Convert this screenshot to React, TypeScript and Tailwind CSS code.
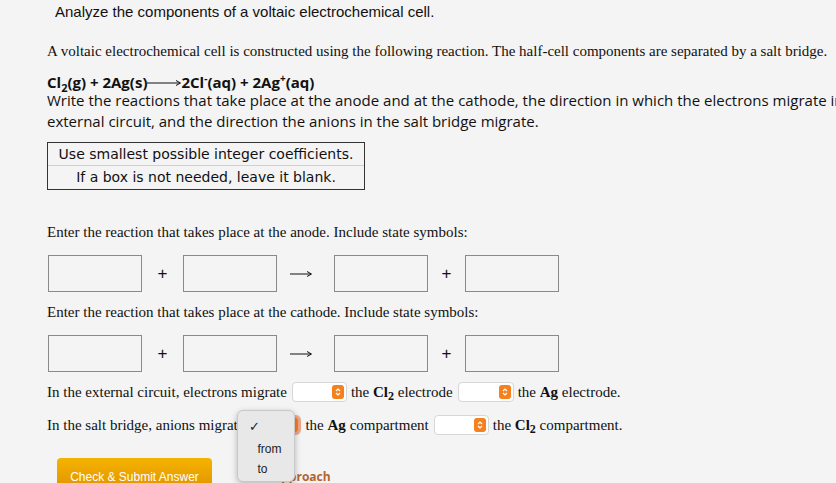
import React from "react";

const serif = { fontFamily: '"Liberation Serif", "Times New Roman", serif' };

function Box() {
  return <div className="w-[94px] h-[37px] border border-[#8a8a8a] bg-[#f4f4f4]" />;
}

function Arrow({ w = 22 }: { w?: number }) {
  return (
    <svg width={w} height="10" viewBox={`0 0 ${w} 10`} className="block">
      <line x1="0" y1="5" x2={w - 1} y2="5" stroke="#111" strokeWidth="1" />
      <path d={`M${w - 5} 2.5 L${w - 0.5} 5 L${w - 5} 7.5`} fill="none" stroke="#111" strokeWidth="1" />
    </svg>
  );
}

function EqRow() {
  return (
    <div className="flex items-center ml-[1px]">
      <Box />
      <span className="w-[41px] text-center text-[17px] text-[#111]" style={{ fontFamily: '"Liberation Sans", Arial, sans-serif' }}>+</span>
      <Box />
      <div className="w-[57px] flex justify-start pl-[13px]"><Arrow /></div>
      <Box />
      <span className="w-[37px] text-center text-[17px] text-[#111]" style={{ fontFamily: '"Liberation Sans", Arial, sans-serif' }}>+</span>
      <Box />
    </div>
  );
}

function Sel({ focus = false, w = 55 }: { focus?: boolean; w?: number }) {
  return (
    <div
      className="relative h-[20px] rounded-[4px] bg-white border border-[#d6d6d6] flex items-center justify-end pr-[2px]"
      style={{ width: w }}
    >
      <div className={`w-[12px] h-[14px] rounded-[3px] bg-[#f5801e] flex items-center justify-center ${focus ? "ring-[3px] ring-[#f0a58a]" : ""}`}>
        <svg width="8" height="10" viewBox="0 0 8 10">
          <path d="M2 4 L4 2 L6 4" fill="none" stroke="white" strokeWidth="1.2" />
          <path d="M2 6 L4 8 L6 6" fill="none" stroke="white" strokeWidth="1.2" />
        </svg>
      </div>
    </div>
  );
}

function Cl2() {
  return (
    <b>
      Cl<sub className="text-[12px] relative top-[3px] align-baseline">2</sub>
    </b>
  );
}

export default function App() {
  return (
    <div className="w-[836px] h-[483px] bg-[#f4f4f4] overflow-hidden relative text-[#111]">
      <div className="pl-[55px] pt-[3px] text-[15px] leading-[18px]" style={{ fontFamily: '"Liberation Sans", Arial, sans-serif' }}>
        Analyze the components of a voltaic electrochemical cell.
      </div>
      <div className="pl-[47px]">
        <div className="mt-[21px] text-[15px] leading-[18px] whitespace-nowrap" style={serif}>
          A voltaic electrochemical cell is constructed using the following reaction. The half-cell components are separated by a salt bridge.
        </div>
        <div className="mt-[11px] text-[15px] leading-[22px] font-bold flex items-center whitespace-nowrap" style={{ fontFamily: '"Open Sans", sans-serif' }}>
          <span>Cl<sub className="text-[11px] align-baseline relative top-[4px]">2</sub>(g) + 2Ag(s)</span>
          <span className="relative top-[1px]"><Arrow w={34} /></span>
          <span>2Cl<sup className="text-[10px] align-baseline relative top-[-6px]">-</sup>(aq) + 2Ag<sup className="text-[10px] align-baseline relative top-[-6px]">+</sup>(aq)</span>
        </div>
        <div className="text-[15px] leading-[21px] whitespace-nowrap -mt-[3px]" style={{ fontFamily: '"Open Sans", sans-serif' }}>
          <div>Write the reactions that take place at the anode and at the cathode, the direction in which the electrons migrate in the</div>
          <div>external circuit, and the direction the anions in the salt bridge migrate.</div>
        </div>
        <div className="mt-[10px] w-[318px] border border-[#333] text-[14px] text-center" style={{ fontFamily: '"DejaVu Sans", Verdana, sans-serif' }}>
          <div className="h-[23px] leading-[23px] border-b border-[#d0d0d0]">Use smallest possible integer coefficients.</div>
          <div className="h-[23px] leading-[23px]">If a box is not needed, leave it blank.</div>
        </div>
        <div className="mt-[33px] text-[15px] leading-[18px]" style={serif}>
          Enter the reaction that takes place at the anode. Include state symbols:
        </div>
        <div className="mt-[14px]"><EqRow /></div>
        <div className="mt-[11px] text-[15px] leading-[18px]" style={serif}>
          Enter the reaction that takes place at the cathode. Include state symbols:
        </div>
        <div className="mt-[14px]"><EqRow /></div>
        <div className="mt-[10px] text-[15px] leading-[20px] flex items-center whitespace-nowrap" style={serif}>
          <span>In the external circuit, electrons migrate</span>
          <span className="ml-[5px] mr-[4px]"><Sel /></span>
          <span>the <Cl2 /> electrode</span>
          <span className="ml-[5px] mr-[4px]"><Sel w={56} /></span>
          <span>the <b>Ag</b> electrode.</span>
        </div>
        <div className="mt-[13px] text-[15px] leading-[20px] flex items-center whitespace-nowrap" style={serif}>
          <span>In the salt bridge, anions migrate</span>
          <span className="ml-[5px] mr-[4px] relative">
            <Sel focus w={52} />
            <div
              className="absolute z-10 left-[-12px] top-[-5px] w-[58px] h-[72px] rounded-[6px] bg-[#e8e8e8] border border-[#c8c8c8] shadow-[0_2px_6px_rgba(0,0,0,0.25)] text-[12px] text-[#222]"
              style={{ fontFamily: '"Liberation Sans", Arial, sans-serif' }}
            >
              <div className="absolute left-[11px] top-[6px] text-[13px]">✓</div>
              <div className="absolute left-[19px] top-[28px]">from</div>
              <div className="absolute left-[19px] top-[48px]">to</div>
            </div>
          </span>
          <span>the <b>Ag</b> compartment</span>
          <span className="ml-[5px] mr-[4px]"><Sel w={55} /></span>
          <span>the <Cl2 /> compartment.</span>
        </div>
        <div className="mt-[23px] flex items-start">
          <div
            className="ml-[10px] w-[155px] h-[30px] rounded-t-[4px] bg-gradient-to-b from-[#f4b400] to-[#e39400] text-white text-[12px] text-center pt-[10px]"
            style={{ fontFamily: '"Liberation Sans", Arial, sans-serif' }}
          >
            Check &amp; Submit Answer
          </div>
          <div className="ml-[61px] mt-[10px] text-[12px] font-bold text-[#b4642c]" style={{ fontFamily: '"Open Sans", sans-serif' }}>
            Approach
          </div>
        </div>
      </div>
    </div>
  );
}
